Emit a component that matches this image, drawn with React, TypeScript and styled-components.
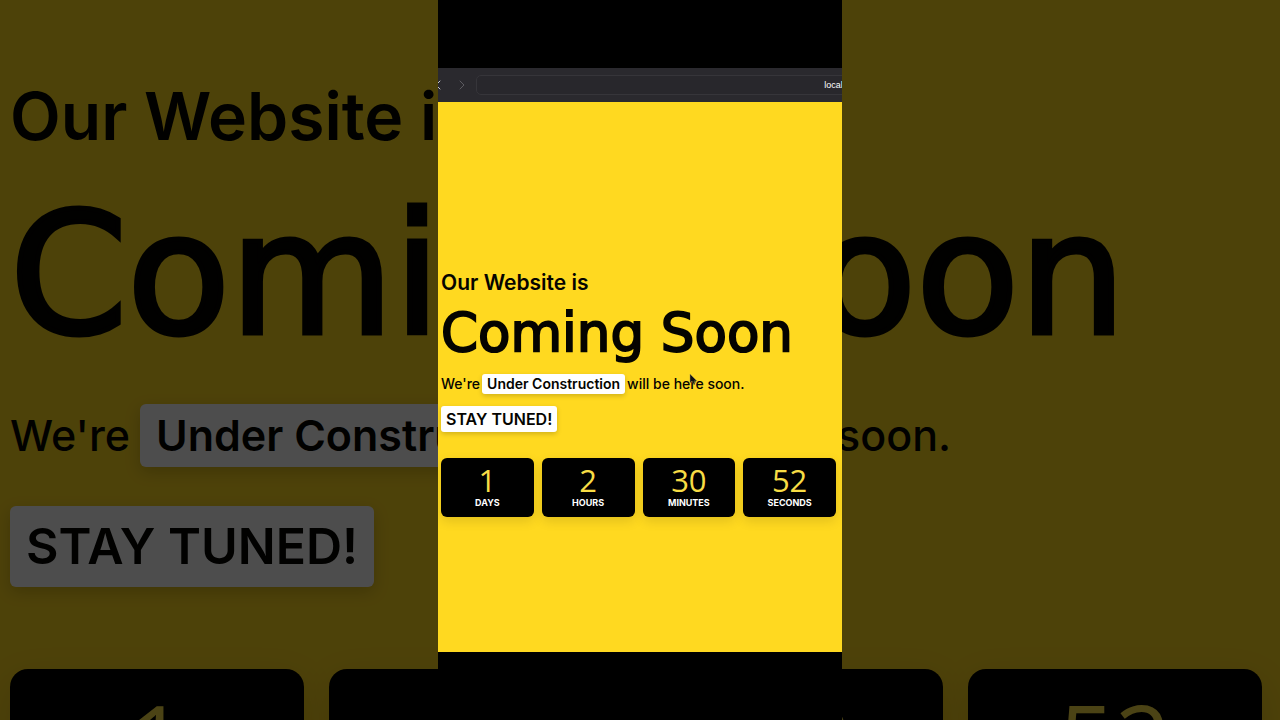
import React from "react";
import styled, { createGlobalStyle, ThemeProvider } from "styled-components";

const GlobalStyle = createGlobalStyle`
  *, *::before, *::after { box-sizing: border-box; }
  body { margin: 0; background: #000; }
  h1, h2, p { margin: 0; }
`;

const body = '"Inter", "Open Sans", sans-serif';

const small = {
  padTop: 34,
  padLeft: 3,
  padRight: 6,
  heading: 21,
  headingLine: 24,
  title: 53,
  titleLine: 76,
  titleGap: 3,
  stroke: 2,
  text: 14,
  textLine: 20,
  pillPad: 5,
  pillRadius: 3,
  pillGap: 2,
  rowGap: 12,
  tuned: 16,
  tunedLine: 26,
  cardsGap: 26,
  cardHeight: 59,
  cardRadius: 6,
  gap: 8,
  number: 31,
  numberLine: 36,
  label: 9,
  labelLine: 10,
  cardPad: 4,
};

const large: typeof small = {
  padTop: 78,
  padLeft: 10,
  padRight: 18,
  heading: 66,
  headingLine: 77,
  title: 168,
  titleLine: 240,
  titleGap: 9,
  stroke: 5,
  text: 43,
  textLine: 63,
  pillPad: 16,
  pillRadius: 6,
  pillGap: 10,
  rowGap: 39,
  tuned: 50,
  tunedLine: 81,
  cardsGap: 82,
  cardHeight: 187,
  cardRadius: 18,
  gap: 25,
  number: 98,
  numberLine: 114,
  label: 29,
  labelLine: 32,
  cardPad: 13,
};

const Stage = styled.main`
  display: grid;
  grid-template: 100vh / minmax(0, 1fr);
  overflow: hidden;
  background: #000;
`;

const Backdrop = styled.div`
  grid-area: 1 / 1;
  display: flex;
  overflow: hidden;
  opacity: 0.3;
`;

const Phone = styled.div`
  grid-area: 1 / 1;
  justify-self: center;
  z-index: 1;
  height: 100%;
  aspect-ratio: 101 / 180;
  display: flex;
  flex-direction: column;
  padding: 68px 0;
  overflow: hidden;
  background: #000;
`;

const Toolbar = styled.nav`
  flex: none;
  display: flex;
  align-items: center;
  height: 34px;
  overflow: hidden;
  background: #2a292e;
`;

const NavButton = styled.button<{ $dim?: boolean }>`
  flex: none;
  display: grid;
  place-items: center;
  width: 24px;
  height: 24px;
  padding: 0;
  border: 0;
  background: none;
  color: ${(p) => (p.$dim ? "#5c5b60" : "#c9c9cb")};
  &:first-child { margin-left: -12px; }
`;

const Address = styled.input`
  flex: none;
  width: 732px;
  height: 20px;
  margin-left: 2px;
  padding: 0;
  border: 1px solid #36353a;
  border-radius: 5px;
  background: #28272c;
  color: #fff;
  font: 9px "Liberation Sans", sans-serif;
  text-align: center;
`;

const Page = styled.section<{ $centered?: boolean }>`
  flex: 1;
  min-width: 0;
  display: flex;
  flex-direction: column;
  justify-content: ${(p) => (p.$centered ? "center" : "flex-start")};
  padding: ${({ theme: t }) => `${t.padTop}px ${t.padRight}px 0 ${t.padLeft}px`};
  background: #ffd920;
  color: #050400;
  font-family: ${body};
`;

const Heading = styled.h2`
  flex: none;
  font-size: ${(p) => p.theme.heading}px;
  line-height: ${(p) => p.theme.headingLine}px;
  font-weight: 600;
  white-space: nowrap;
`;

const Title = styled.h1`
  flex: none;
  margin-bottom: ${(p) => p.theme.titleGap}px;
  font-family: "DejaVu Sans", sans-serif;
  font-size: ${(p) => p.theme.title}px;
  line-height: ${(p) => p.theme.titleLine}px;
  font-weight: 400;
  white-space: nowrap;
  -webkit-text-stroke: ${(p) => p.theme.stroke}px #050400;
  stroke-linejoin: round;
`;

const Message = styled.p`
  flex: none;
  display: flex;
  gap: ${(p) => p.theme.pillGap}px;
  margin-bottom: ${(p) => p.theme.rowGap}px;
  font-size: ${(p) => p.theme.text}px;
  line-height: ${(p) => p.theme.textLine}px;
  font-weight: 500;
  white-space: nowrap;
`;

const Pill = styled.strong`
  padding: 0 ${(p) => p.theme.pillPad}px;
  border-radius: ${(p) => p.theme.pillRadius}px;
  background: #fff;
  font-weight: 600;
  box-shadow: 0 ${(p) => p.theme.stroke}px ${(p) => p.theme.pillPad}px rgba(0, 0, 0, 0.18);
`;

const Tuned = styled(Pill).attrs({ as: "p" })`
  flex: none;
  align-self: flex-start;
  margin-bottom: ${(p) => p.theme.cardsGap}px;
  font-size: ${(p) => p.theme.tuned}px;
  line-height: ${(p) => p.theme.tunedLine}px;
  white-space: nowrap;
`;

const Cards = styled.div`
  flex: none;
  display: grid;
  grid-template-columns: repeat(4, minmax(0, 1fr));
  gap: ${(p) => p.theme.gap}px;
`;

const Card = styled.div`
  height: ${(p) => p.theme.cardHeight}px;
  padding-top: ${(p) => p.theme.cardPad}px;
  border-radius: ${(p) => p.theme.cardRadius}px;
  background: #000;
  text-align: center;
  box-shadow: 0 ${(p) => p.theme.cardPad}px ${(p) => p.theme.rowGap}px rgba(0, 0, 0, 0.12);
`;

const Count = styled.div`
  color: #f7dc45;
  font-family: "Open Sans", sans-serif;
  font-size: ${(p) => p.theme.number}px;
  line-height: ${(p) => p.theme.numberLine}px;
  font-weight: 500;
`;

const Unit = styled.div`
  color: #fff;
  font-size: ${(p) => p.theme.label}px;
  line-height: ${(p) => p.theme.labelLine}px;
  font-weight: 700;
`;

const PointerLayer = styled.div`
  grid-area: 1 / 1;
  z-index: 2;
  position: relative;
  pointer-events: none;
`;

const Pointer = styled.svg`
  position: absolute;
  left: calc(50% + 49px);
  top: calc(50% + 13px);
`;

const remaining = [
  { unit: "DAYS", value: 1 },
  { unit: "HOURS", value: 2 },
  { unit: "MINUTES", value: 30 },
  { unit: "SECONDS", value: 52 },
];

function ComingSoon({ centered }: { centered?: boolean }) {
  return (
    <Page $centered={centered}>
      <Heading>Our Website is</Heading>
      <Title>Coming Soon</Title>
      <Message>
        <span>We're</span>
        <Pill>Under Construction</Pill>
        <span>will be here soon.</span>
      </Message>
      <Tuned>STAY TUNED!</Tuned>
      <Cards>
        {remaining.map((r) => (
          <Card key={r.unit}>
            <Count>{r.value}</Count>
            <Unit>{r.unit}</Unit>
          </Card>
        ))}
      </Cards>
    </Page>
  );
}

function Chevron({ d }: { d: string }) {
  return (
    <svg width="6" height="10" viewBox="0 0 6 10" fill="none" stroke="currentColor" strokeLinecap="round" strokeLinejoin="round">
      <path d={d} />
    </svg>
  );
}

export default function App() {
  return (
    <Stage>
      <GlobalStyle />
      <ThemeProvider theme={large}>
        <Backdrop aria-hidden="true">
          <ComingSoon />
        </Backdrop>
      </ThemeProvider>
      <ThemeProvider theme={small}>
        <Phone>
          <Toolbar aria-label="Browser">
            <NavButton type="button" aria-label="Back">
              <Chevron d="M5 1 1 5l4 4" />
            </NavButton>
            <NavButton type="button" aria-label="Forward" $dim>
              <Chevron d="m1 1 4 4-4 4" />
            </NavButton>
            <Address aria-label="Address" defaultValue="localhost" />
          </Toolbar>
          <ComingSoon centered />
        </Phone>
        <PointerLayer aria-hidden="true">
          <Pointer width="9" height="13" viewBox="0 0 9 13">
            <path d="M1 1v9l2-2 2 4 1-1-1-3h3z" fill="#111" stroke="#a99a50" strokeWidth=".5" />
          </Pointer>
        </PointerLayer>
      </ThemeProvider>
    </Stage>
  );
}
